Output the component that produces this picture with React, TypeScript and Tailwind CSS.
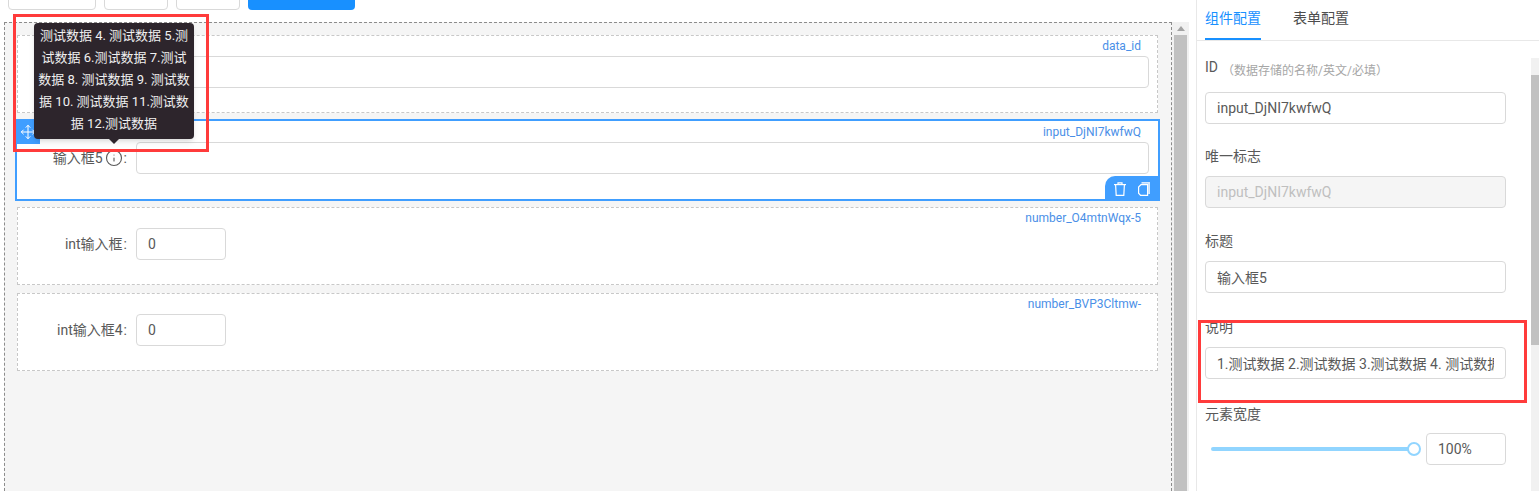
import { Info, Move } from "lucide-react";

const inputCls =
  "block h-8 w-full rounded-[4px] border border-[#d9d9d9] bg-white px-[11px] text-sm text-[#595959] outline-none";

function Item({
  id,
  label,
  value,
  wide,
  selected,
  info,
  hideLabel,
}: {
  id: string;
  label?: string;
  value?: string;
  wide?: boolean;
  selected?: boolean;
  info?: boolean;
  hideLabel?: boolean;
}) {
  return (
    <div
      className={
        selected
          ? "relative -mx-[2px] -my-[2px] h-[82px] border-2 border-[#409eff] bg-white pr-[9px] pt-[4px]"
          : "relative h-[78px] border border-dashed border-[#c8c8c8] bg-white pr-[8px] pt-[3px]"
      }
    >
      <div className="h-[17px] pr-[8px] text-right text-xs leading-[15px] text-[#4a8fe7]">{id}</div>
      <div className="flex h-8 items-center">
        <div
          className={
            selected
              ? "flex w-[119px] shrink-0 items-center justify-end pr-[9px] text-sm text-[#595959]"
              : "flex w-[118px] shrink-0 items-center justify-end pr-[9px] text-sm text-[#595959]"
          }
        >
          {!hideLabel && label}
          {info && <Info className="ml-[2px] size-[18px] text-[#595959]" strokeWidth={1.5} />}
          {!hideLabel && <span className="ml-[1px]">:</span>}
        </div>
        <input
          readOnly
          defaultValue={value ?? ""}
          className={
            wide
              ? "block h-8 min-w-0 flex-1 rounded-[4px] border border-[#d9d9d9] bg-white px-[11px] text-sm text-[#595959] outline-none"
              : "block h-8 w-[90px] rounded-[4px] border border-[#d9d9d9] bg-white px-[11px] text-sm text-[#595959] outline-none"
          }
        />
      </div>
      {selected && (
        <>
          <div className="absolute left-[-1px] top-[-2px] flex h-[25px] w-[24px] items-center justify-center bg-[#409eff] text-white">
            <Move className="size-[16px]" strokeWidth={1.5} />
          </div>
          <div className="absolute bottom-[-2px] right-[-2px] flex h-[25px] w-[55px] items-center justify-start gap-[12px] rounded-tl-[10px] bg-[#409eff] pl-[9px] text-white">
            <svg width="12" height="14" viewBox="0 0 12 14" fill="none" stroke="currentColor" strokeWidth="1.2">
              <path d="M0 2.6h12" />
              <path d="M4 2.4V.8h4v1.6" />
              <path d="M1.6 2.6l.6 10.8h7.6l.6-10.8" />
            </svg>
            <svg width="12" height="14" viewBox="0 0 12 14" fill="none">
              <path d="M3.5 0h8.5v12h-1.8V1.8H3.5z" fill="#d5e9ff" />
              <path d="M3 2.6h6.6v10.8H2.6L.6 11.2V5z" stroke="currentColor" strokeWidth="1.2" />
            </svg>
          </div>
        </>
      )}
    </div>
  );
}

function Field({
  label,
  note,
  value,
  disabled,
  className,
  gap,
}: {
  label: string;
  note?: string;
  value: string;
  disabled?: boolean;
  className: string;
  gap: string;
}) {
  return (
    <div className={className}>
      <div className="flex h-[22px] items-center text-sm leading-[22px] text-[#595959]">
        {label}
        {note && <span className="ml-[4px] mt-[7px] text-xs text-[#a6a6a6]">{note}</span>}
      </div>
      <input
        readOnly
        defaultValue={value}
        className={
          disabled
            ? gap + " block h-8 w-full rounded-[4px] border border-[#d9d9d9] bg-[#f5f5f5] px-[11px] text-sm text-[#bfbfbf] outline-none"
            : gap + " " + inputCls
        }
      />
    </div>
  );
}

export default function App() {
  return (
    <div className="relative flex h-[491px] w-[1539px] overflow-hidden bg-white font-['Roboto','Noto_Sans_CJK_SC',sans-serif]">
      {/* left work area */}
      <div className="flex w-[1197px] shrink-0 flex-col border-r border-[#e8e8e8] pl-[4px]">
        <div className="flex h-[10px] items-end gap-[8px] pl-[4px]">
          <div className="h-8 w-[88px] shrink-0 rounded-[4px] border border-[#d9d9d9] bg-white" />
          <div className="h-8 w-[64px] shrink-0 rounded-[4px] border border-[#d9d9d9] bg-white" />
          <div className="h-8 w-[64px] shrink-0 rounded-[4px] border border-[#d9d9d9] bg-white" />
          <div className="h-8 w-[107px] shrink-0 rounded-[4px] bg-[#1890ff]" />
        </div>
        <div className="mt-[12px] flex min-h-0 flex-1">
          <div className="flex w-[1168px] shrink-0 flex-col gap-[8px] border border-b-0 border-dashed border-[#8c8c8c] bg-[#f5f5f5] pl-[12px] pr-[13px] pt-[12px]">
            <Item id="data_id" wide hideLabel />
            <Item id="input_DjNI7kwfwQ" label="输入框5" wide selected info />
            <Item id="number_O4mtnWqx-5" label="int输入框" value="0" />
            <Item id="number_BVP3Cltmw-" label="int输入框4" value="0" />
          </div>
          <div className="flex w-[17px] shrink-0 flex-col items-center bg-[#f1f1f1] pt-[4px]">
            <div className="h-0 w-0 border-x-[4px] border-b-[5px] border-x-transparent border-b-[#a3a3a3]" />
            <div className="mt-[4px] w-[13px] flex-1 bg-[#c1c1c1]" />
          </div>
        </div>
      </div>

      {/* right config panel */}
      <div className="flex min-w-0 flex-1 flex-col">
        <div className="flex h-[41px] shrink-0 gap-[32px] border-b border-[#e8e8e8] pl-[8px] text-sm">
          <div className="h-[40px] border-b-2 border-[#1890ff] pt-[7px] leading-[22px] text-[#1890ff]">组件配置</div>
          <div className="pt-[7px] leading-[22px] text-[#4d4d4d]">表单配置</div>
        </div>
        <div className="flex min-h-0 flex-1">
          <div className="ml-[8px] w-[301px] shrink-0">
            <Field className="mt-[15px]" gap="mt-[14px]" label="ID" note="（数据存储的名称/英文/必填）" value="input_DjNI7kwfwQ" />
            <Field className="mt-[21px]" gap="mt-[9px]" disabled label="唯一标志" value="input_DjNI7kwfwQ" />
            <Field className="mt-[22px]" gap="mt-[9px]" label="标题" value="输入框5" />
            <Field
              className="mt-[23px]"
              gap="mt-[9px]"
              label="说明"
              value="1.测试数据 2.测试数据 3.测试数据 4. 测试数据 5.测试数据 6.测试数据 7.测试数据"
            />
            <div className="mt-[24px]">
              <div className="h-[22px] text-sm leading-[22px] text-[#595959]">元素宽度</div>
              <div className="mt-[8px] flex h-8 items-center">
                <div className="relative ml-[6px] h-[4px] w-[203px] rounded-full bg-[#91d5ff]">
                  <div className="absolute right-[-7px] top-[-5px] size-[14px] rounded-full border-2 border-[#91d5ff] bg-white" />
                </div>
                <input readOnly defaultValue="100%" className="ml-[12px] block h-8 w-[80px] rounded-[4px] border border-[#d9d9d9] bg-white px-[11px] text-sm text-[#595959] outline-none" />
              </div>
            </div>
          </div>
          <div className="ml-auto mt-[17px] flex w-[8px] flex-col bg-[#f1f1f1]">
            <div className="mt-[17px] h-[270px] w-full bg-[#c1c1c1]" />
          </div>
        </div>
      </div>

      {/* tooltip */}
      <div className="absolute left-[34px] top-[23px] w-[160px] rounded-[4px] bg-[#2d252c] pb-[4px] pt-[2px] text-center text-[13px] leading-[22px] text-[#f0f0f0] shadow-md">
        <div className="whitespace-nowrap">测试数据 4. 测试数据 5.测</div>
        <div className="whitespace-nowrap">试数据 6.测试数据 7.测试</div>
        <div className="whitespace-nowrap">数据 8. 测试数据 9. 测试数</div>
        <div className="whitespace-nowrap">据 10. 测试数据 11.测试数</div>
        <div className="whitespace-nowrap">据 12.测试数据</div>
        <div className="absolute bottom-[-5px] left-[75px] h-0 w-0 border-x-[5px] border-t-[5px] border-x-transparent border-t-[#2d252c]" />
      </div>

      {/* annotation boxes */}
      <div className="pointer-events-none absolute left-[13px] top-[14px] h-[138px] w-[196px] border-[3px] border-[#ff3b3b]" />
      <div className="pointer-events-none absolute left-[1198px] top-[320px] h-[83px] w-[329px] border-[3px] border-[#ff3b3b]" />
    </div>
  );
}
